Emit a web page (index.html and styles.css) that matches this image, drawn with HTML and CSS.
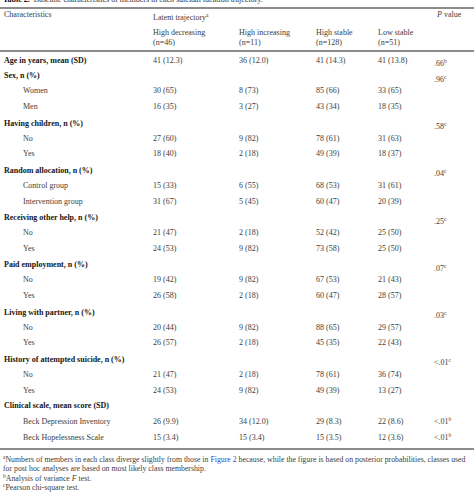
FILE: index.html
```html
<!DOCTYPE html>
<html lang="en">
<head>
<meta charset="utf-8">
<title>Table 2</title>
<link rel="stylesheet" href="styles.css">
</head>
<body>
<div class="page">
  <p class="caption"><b>Table 2.</b>&nbsp; Baseline characteristics of members in each suicidal ideation trajectory.</p>
  <div class="rule"></div>
  <div class="thead">
    <div class="hrow1">
      <div class="c0">Characteristics</div>
      <div class="latent">Latent trajectory<sup>a</sup></div>
      <div class="pv"><i>P</i> value</div>
    </div>
    <div class="hrow2">
      <div class="c0"></div>
      <div>High decreasing<br>(n=46)</div>
      <div>High increasing<br>(n=11)</div>
      <div>High stable<br>(n=128)</div>
      <div>Low stable<br>(n=51)</div>
      <div></div>
    </div>
  </div>
  <div class="rule"></div>
  <div class="tbody">
    <div class="row cat"><div class="c0">Age in years, mean (SD)</div><div>41 (12.3)</div><div>36 (12.0)</div><div>41 (14.3)</div><div>41 (13.8)</div><div class="pl">.66<sup>b</sup></div></div>
    <div class="row cat"><div class="c0">Sex, n (%)</div><div></div><div></div><div></div><div></div><div class="pl">.96<sup>c</sup></div></div>
    <div class="row"><div class="c0 sub">Women</div><div>30 (65)</div><div>8 (73)</div><div>85 (66)</div><div>33 (65)</div><div></div></div>
    <div class="row"><div class="c0 sub">Men</div><div>16 (35)</div><div>3 (27)</div><div>43 (34)</div><div>18 (35)</div><div></div></div>
    <div class="row cat"><div class="c0">Having children, n (%)</div><div></div><div></div><div></div><div></div><div class="pl">.58<sup>c</sup></div></div>
    <div class="row"><div class="c0 sub">No</div><div>27 (60)</div><div>9 (82)</div><div>78 (61)</div><div>31 (63)</div><div></div></div>
    <div class="row"><div class="c0 sub">Yes</div><div>18 (40)</div><div>2 (18)</div><div>49 (39)</div><div>18 (37)</div><div></div></div>
    <div class="row cat"><div class="c0">Random allocation, n (%)</div><div></div><div></div><div></div><div></div><div class="pl">.04<sup>c</sup></div></div>
    <div class="row"><div class="c0 sub">Control group</div><div>15 (33)</div><div>6 (55)</div><div>68 (53)</div><div>31 (61)</div><div></div></div>
    <div class="row"><div class="c0 sub">Intervention group</div><div>31 (67)</div><div>5 (45)</div><div>60 (47)</div><div>20 (39)</div><div></div></div>
    <div class="row cat"><div class="c0">Receiving other help, n (%)</div><div></div><div></div><div></div><div></div><div class="pl">.25<sup>c</sup></div></div>
    <div class="row"><div class="c0 sub">No</div><div>21 (47)</div><div>2 (18)</div><div>52 (42)</div><div>25 (50)</div><div></div></div>
    <div class="row"><div class="c0 sub">Yes</div><div>24 (53)</div><div>9 (82)</div><div>73 (58)</div><div>25 (50)</div><div></div></div>
    <div class="row cat"><div class="c0">Paid employment, n (%)</div><div></div><div></div><div></div><div></div><div class="pl">.07<sup>c</sup></div></div>
    <div class="row"><div class="c0 sub">No</div><div>19 (42)</div><div>9 (82)</div><div>67 (53)</div><div>21 (43)</div><div></div></div>
    <div class="row"><div class="c0 sub">Yes</div><div>26 (58)</div><div>2 (18)</div><div>60 (47)</div><div>28 (57)</div><div></div></div>
    <div class="row cat"><div class="c0">Living with partner, n (%)</div><div></div><div></div><div></div><div></div><div class="pl">.03<sup>c</sup></div></div>
    <div class="row"><div class="c0 sub">No</div><div>20 (44)</div><div>9 (82)</div><div>88 (65)</div><div>29 (57)</div><div></div></div>
    <div class="row"><div class="c0 sub">Yes</div><div>26 (57)</div><div>2 (18)</div><div>45 (35)</div><div>22 (43)</div><div></div></div>
    <div class="row cat"><div class="c0">History of attempted suicide, n (%)</div><div></div><div></div><div></div><div></div><div class="pl">&lt;.01<sup>c</sup></div></div>
    <div class="row"><div class="c0 sub">No</div><div>21 (47)</div><div>2 (18)</div><div>78 (61)</div><div>36 (74)</div><div></div></div>
    <div class="row"><div class="c0 sub">Yes</div><div>24 (53)</div><div>9 (82)</div><div>49 (39)</div><div>13 (27)</div><div></div></div>
    <div class="row cat"><div class="c0">Clinical scale, mean score (SD)</div><div></div><div></div><div></div><div></div><div></div></div>
    <div class="row"><div class="c0 sub">Beck Depression Inventory</div><div>26 (9.9)</div><div>34 (12.0)</div><div>29 (8.3)</div><div>22 (8.6)</div><div>&lt;.01<sup>b</sup></div></div>
    <div class="row"><div class="c0 sub">Beck Hopelessness Scale</div><div>15 (3.4)</div><div>15 (3.4)</div><div>15 (3.5)</div><div>12 (3.6)</div><div>&lt;.01<sup>b</sup></div></div>
  </div>
  <div class="rule bottom"></div>
  <div class="notes">
    <p class="n1"><sup>a</sup>Numbers of members in each class diverge slightly from those in <span class="link">Figure 2</span> because, while the figure is based on posterior probabilities, classes used<br>for post hoc analyses are based on most likely class membership.</p>
    <p><sup>b</sup>Analysis of variance <i>F</i> test.</p>
    <p><sup>c</sup>Pearson chi-square test.</p>
  </div>
</div>
</body>
</html>
```

FILE: styles.css
```css
html, body {
  margin: 0;
  padding: 0;
  background: #ffffff;
}
body {
  font-family: "Liberation Serif", "Times New Roman", serif;
  font-size: 8px;
  color: #3c3c3c;
  overflow: hidden;
}
.page {
  width: 474px;
}
.caption {
  margin: -5px 0 0 3px;
  line-height: 10px;
  height: 10px;
  white-space: nowrap;
  color: #333;
}
.caption b {
  color: #111;
}
.rule {
  height: 2px;
  background: #8c8c8c;
  margin-top: 2px;
}
.thead {
  padding: 1px 0 2px 0;
}
.hrow1, .hrow2, .row {
  display: grid;
  grid-template-columns: 153px 86px 77px 62px 56px 40px;
}
.hrow1 {
  line-height: 10px;
}
.hrow1 .c0 {
  padding-left: 4px;
}
.latent {
  grid-column: 2 / 6;
  padding-top: 3px;
}
.pv {
  padding-left: 3px;
}
.hrow2 {
  margin-top: 5px;
  line-height: 10px;
}
.thead + .rule {
  margin-top: 0;
}
.tbody .row {
  height: 15.75px;
  align-items: center;
  line-height: 10px;
}
.row .c0 {
  padding-left: 4px;
  white-space: nowrap;
}
.row .c0.sub {
  padding-left: 23px;
}
.row.cat .c0 {
  font-weight: bold;
  color: #151515;
}
.pl {
  padding-top: 7px;
}
sup {
  font-size: 5.5px;
  line-height: 0;
  vertical-align: 3px;
}
.rule.bottom {
  margin-top: 2px;
}
.notes {
  margin-top: 5px;
  padding-left: 3px;
  font-size: 7.8px;
}
.notes p {
  margin: 0;
  line-height: 9.5px;
}
.notes .n1 {
  white-space: nowrap;
}
.link {
  color: #3344cc;
}
```
